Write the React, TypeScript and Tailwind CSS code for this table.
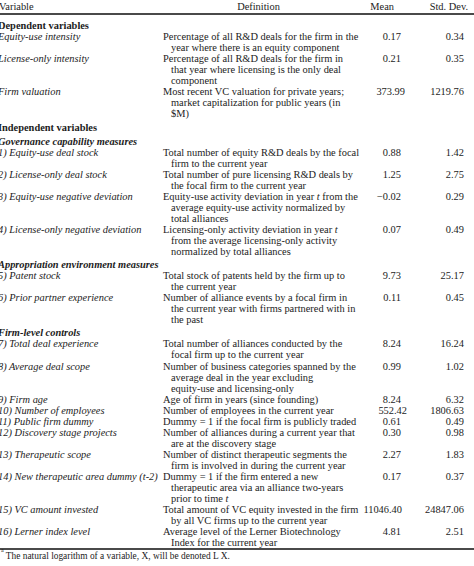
import React from 'react';

type Item = {
  kind: 'item';
  name: string;
  lines: React.ReactNode[];
  mean: string;
  sd: string;
  meanPr?: string;
};
type Section = { kind: 'section'; label: string; italic?: boolean; gap?: string };
type Row = Item | Section;

const t = <i>t</i>;

const rows: Row[] = [
  { kind: 'section', label: 'Dependent variables' },
  {
    kind: 'item',
    name: 'Equity-use intensity',
    lines: ['Percentage of all R&D deals for the firm in the', 'year where there is an equity component'],
    mean: '0.17',
    sd: '0.34',
  },
  {
    kind: 'item',
    name: 'License-only intensity',
    lines: ['Percentage of all R&D deals for the firm in', 'that year where licensing is the only deal', 'component'],
    mean: '0.21',
    sd: '0.35',
  },
  {
    kind: 'item',
    name: 'Firm valuation',
    lines: ['Most recent VC valuation for private years;', 'market capitalization for public years (in', '$M)'],
    mean: '373.99',
    sd: '1219.76',
    meanPr: 'pr-[9px]',
  },
  { kind: 'section', label: 'Independent variables', gap: 'mt-[2px]' },
  { kind: 'section', label: 'Governance capability measures', italic: true, gap: 'mt-[3px]' },
  {
    kind: 'item',
    name: '1) Equity-use deal stock',
    lines: ['Total number of equity R&D deals by the focal', 'firm to the current year'],
    mean: '0.88',
    sd: '1.42',
  },
  {
    kind: 'item',
    name: '2) License-only deal stock',
    lines: ['Total number of pure licensing R&D deals by', 'the focal firm to the current year'],
    mean: '1.25',
    sd: '2.75',
  },
  {
    kind: 'item',
    name: '3) Equity-use negative deviation',
    lines: [<>Equity-use activity deviation in year {t} from the</>, 'average equity-use activity normalized by', 'total alliances'],
    mean: '\u22120.02',
    sd: '0.29',
  },
  {
    kind: 'item',
    name: '4) License-only negative deviation',
    lines: [<>Licensing-only activity deviation in year {t}</>, 'from the average licensing-only activity', 'normalized by total alliances'],
    mean: '0.07',
    sd: '0.49',
  },
  { kind: 'section', label: 'Appropriation environment measures', italic: true, gap: 'mt-[2px]' },
  {
    kind: 'item',
    name: '5) Patent stock',
    lines: ['Total stock of patents held by the firm up to', 'the current year'],
    mean: '9.73',
    sd: '25.17',
  },
  {
    kind: 'item',
    name: '6) Prior partner experience',
    lines: ['Number of alliance events by a focal firm in', 'the current year with firms partnered with in', 'the past'],
    mean: '0.11',
    sd: '0.45',
  },
  { kind: 'section', label: 'Firm-level controls', italic: true, gap: 'mt-[2px]' },
  {
    kind: 'item',
    name: '7) Total deal experience',
    lines: ['Total number of alliances conducted by the', 'focal firm up to the current year'],
    mean: '8.24',
    sd: '16.24',
  },
  {
    kind: 'item',
    name: '8) Average deal scope',
    lines: ['Number of business categories spanned by the', 'average deal in the year excluding', 'equity-use and licensing-only'],
    mean: '0.99',
    sd: '1.02',
  },
  {
    kind: 'item',
    name: '9) Firm age',
    lines: ['Age of firm in years (since founding)'],
    mean: '8.24',
    sd: '6.32',
  },
  {
    kind: 'item',
    name: '10) Number of employees',
    lines: ['Number of employees in the current year'],
    mean: '552.42',
    sd: '1806.63',
    meanPr: 'pr-[7px]',
  },
  {
    kind: 'item',
    name: '11) Public firm dummy',
    lines: ['Dummy = 1 if the focal firm is publicly traded'],
    mean: '0.61',
    sd: '0.49',
  },
  {
    kind: 'item',
    name: '12) Discovery stage projects',
    lines: ['Number of alliances during a current year that', 'are at the discovery stage'],
    mean: '0.30',
    sd: '0.98',
  },
  {
    kind: 'item',
    name: '13) Therapeutic scope',
    lines: ['Number of distinct therapeutic segments the', 'firm is involved in during the current year'],
    mean: '2.27',
    sd: '1.83',
  },
  {
    kind: 'item',
    name: '14) New therapeutic area dummy (t-2)',
    lines: ['Dummy = 1 if the firm entered a new', 'therapeutic area via an alliance two-years', <>prior to time {t}</>],
    mean: '0.17',
    sd: '0.37',
  },
  {
    kind: 'item',
    name: '15) VC amount invested',
    lines: ['Total amount of VC equity invested in the firm', 'by all VC firms up to the current year'],
    mean: '11046.40',
    sd: '24847.06',
    meanPr: 'pr-[12px]',
  },
  {
    kind: 'item',
    name: '16) Lerner index level',
    lines: ['Average level of the Lerner Biotechnology', 'Index for the current year'],
    mean: '4.81',
    sd: '2.51',
  },
];

function ItemRow({ r }: { r: Item }) {
  return (
    <div className="flex">
      <div className="w-[165px] -ml-[2px] shrink-0 italic whitespace-nowrap">{r.name}</div>
      <div className="w-[191px] shrink-0">
        {r.lines.map((line, i) => (
          <div key={i} className={`whitespace-nowrap ${i > 0 ? 'pl-[8px]' : ''}`}>
            {line}
          </div>
        ))}
      </div>
      <div className={`w-[60px] shrink-0 text-right ${r.meanPr ?? 'pr-[13px]'}`}>{r.mean}</div>
      <div className="w-[50px] shrink-0 text-right">{r.sd}</div>
    </div>
  );
}

function SectionRow({ r }: { r: Section }) {
  return (
    <div className={`-ml-[2px] font-bold whitespace-nowrap ${r.italic ? 'italic' : ''} ${r.gap ?? ''}`}>
      {r.label}
    </div>
  );
}

export default function App() {
  return (
    <div className="w-[474px] h-[566px] overflow-hidden bg-white text-[#1c1c1c] font-['Liberation_Serif',serif] text-[10.4px] leading-[11.1px]">
      <div className="flex pt-px">
        <div className="w-[164px] -ml-[1px] shrink-0">Variable</div>
        <div className="w-[191px] shrink-0 text-center">Definition</div>
        <div className="w-[59px] shrink-0 text-right pr-[19px]">Mean</div>
        <div className="w-[55px] shrink-0 text-right">Std. Dev.</div>
      </div>
      <div className="mt-[1px] h-[2px] bg-[#4a4a4a]" />
      <div className="pt-[5px] leading-[11.05px]">
        {rows.map((r, i) =>
          r.kind === 'section' ? <SectionRow key={i} r={r} /> : <ItemRow key={i} r={r} />
        )}
      </div>
      <div className="h-[2px] bg-[#4a4a4a]" />
      <div className="mt-[1px] pl-[1px] text-[9.4px] leading-[11px] whitespace-nowrap">
        <sup className="text-[6px] align-super">a</sup> The natural logarithm of a variable, X, will be denoted L X.
      </div>
    </div>
  );
}
